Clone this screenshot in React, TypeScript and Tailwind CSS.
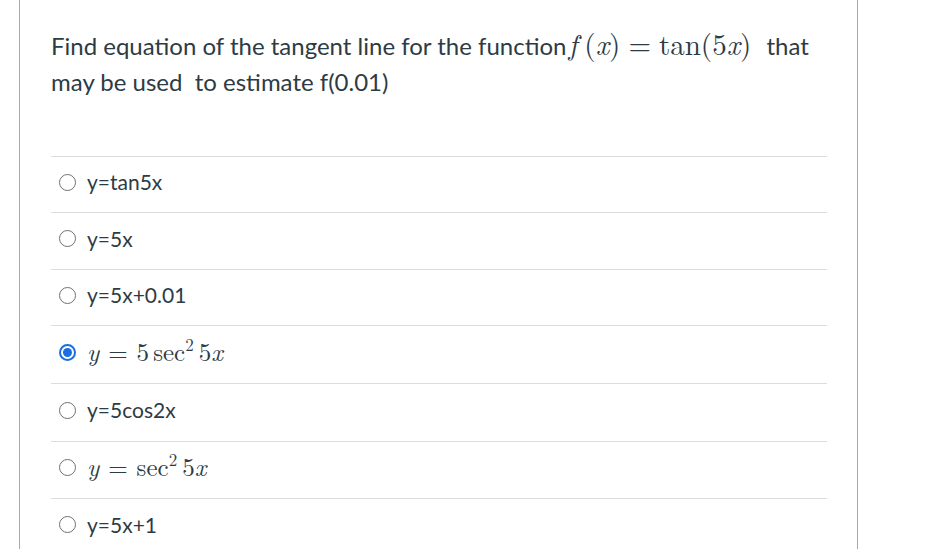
import React from "react";

const lato = { fontFamily: "Lato, 'Open Sans', sans-serif" };
const serif = { fontFamily: "'Latin Modern Roman', 'Latin Modern Math', 'Liberation Serif', serif" };

function Radio({ checked }: { checked?: boolean }) {
  if (checked) {
    return (
      <span className="flex h-[17px] w-[17px] shrink-0 items-center justify-center rounded-full border-[2px] border-[#1a6fe0] bg-white">
        <span className="h-[9px] w-[9px] rounded-full bg-[#1a6fe0]" />
      </span>
    );
  }
  return <span className="h-[17px] w-[17px] shrink-0 rounded-full border-[1.5px] border-[#707070] bg-white" />;
}

function MathSec({ coef }: { coef?: string }) {
  return (
    <span className="relative top-[-2px] whitespace-nowrap text-[25px] leading-none text-[#2d3b45]" style={serif}>
      <i>y</i>
      <span className="mx-[9px]">=</span>
      {coef ? <span className="mr-[4px]">{coef}</span> : null}
      <span>sec</span>
      <span className="relative top-[-10px] text-[17px]">2</span>
      <span className="ml-[5px]">5</span>
      <i>x</i>
    </span>
  );
}

function Row({ h, checked, children }: { h: string; checked?: boolean; children: React.ReactNode }) {
  return (
    <div className={`flex items-center border-t border-[#dcdcdc] pb-[5px] pl-[8px] ${h}`}>
      <Radio checked={checked} />
      <div className="ml-[11px] flex items-center">{children}</div>
    </div>
  );
}

export default function App() {
  return (
    <div className="h-[549px] w-[948px] overflow-hidden bg-white" style={lato}>
      <div className="ml-[19px] h-full w-[839px] border-l border-r border-[#a9a9a9] pl-[31px] pr-[30px]">
        <div className="h-[156px] pt-[28px] text-[24px] leading-[36px] text-[#2d3b45]">
          <div className="whitespace-nowrap">
            Find equation of the tangent line for the function
            <span className="ml-[2px] text-[29px] leading-none" style={serif}>
              <i>f</i>
              <span className="ml-[7px]">(</span>
              <i>x</i>
              <span>)</span>
              <span className="mx-[8px]">=</span>
              <span>tan(5</span>
              <i>x</i>
              <span>)</span>
            </span>
            <span className="ml-[15px]">that</span>
          </div>
          <div className="whitespace-pre">may be used  to estimate f(0.01)</div>
        </div>
        <div className="text-[21px] text-[#2d3b45]">
          <Row h="h-[56px]">y=tan5x</Row>
          <Row h="h-[57px]">y=5x</Row>
          <Row h="h-[56px]">y=5x+0.01</Row>
          <Row h="h-[58px]" checked>
            <MathSec coef="5" />
          </Row>
          <Row h="h-[58px]">y=5cos2x</Row>
          <Row h="h-[57px]">
            <MathSec />
          </Row>
          <Row h="h-[57px]">y=5x+1</Row>
        </div>
      </div>
    </div>
  );
}
